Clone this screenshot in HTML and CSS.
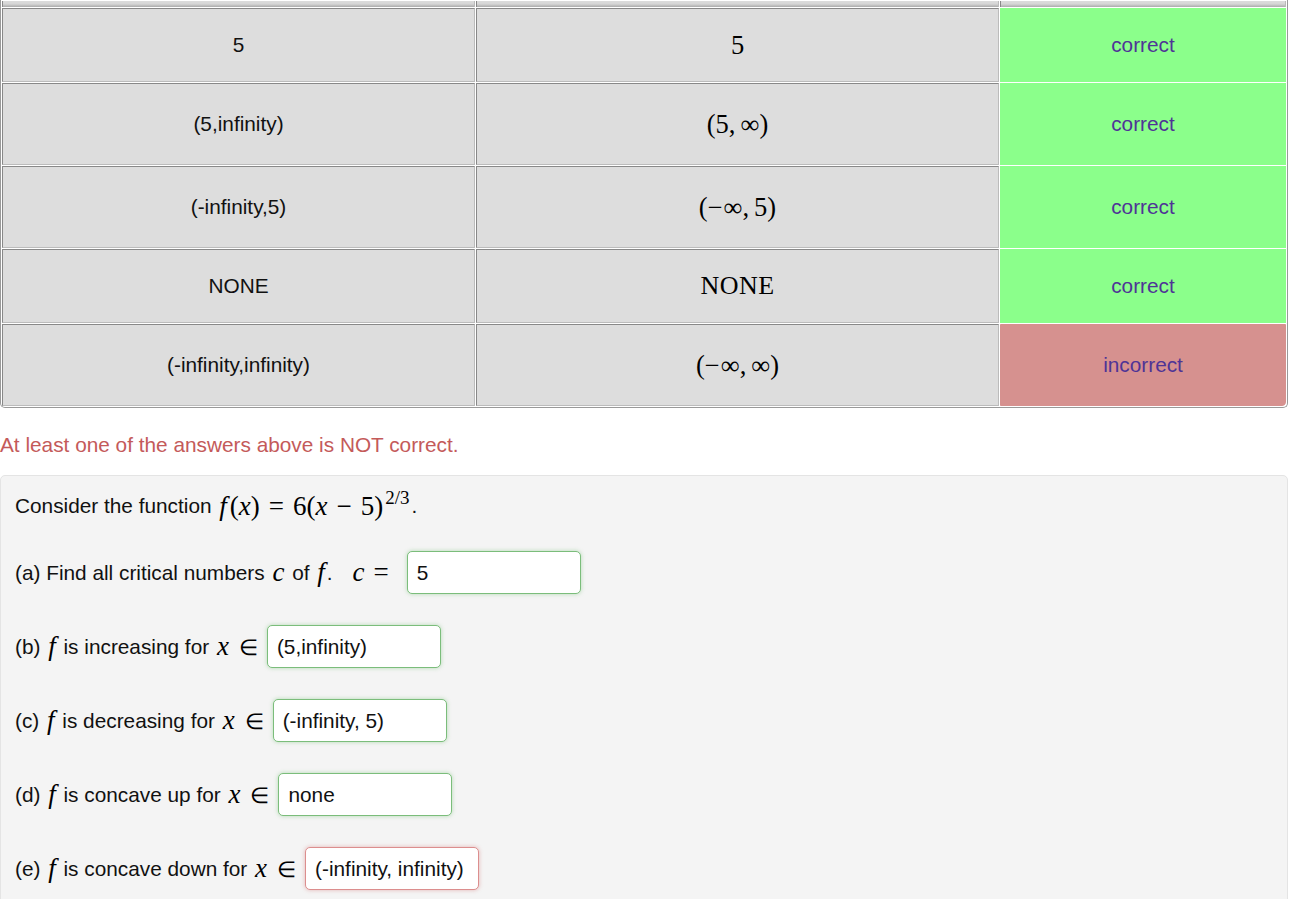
FILE: index.html
```html
<!DOCTYPE html>
<html lang="en">
<head>
<meta charset="utf-8">
<title>Problem</title>
<link rel="stylesheet" href="styles.css">
</head>
<body>
<div class="page">
  <table class="results">
    <tr class="head"><th></th><th></th><th></th></tr>
    <tr class="short">
      <td class="entered">5</td>
      <td class="preview"><span class="tm">5</span></td>
      <td class="ok">correct</td>
    </tr>
    <tr class="tall">
      <td class="entered">(5,infinity)</td>
      <td class="preview"><span class="tm">(5,<span class="thin"></span>∞)</span></td>
      <td class="ok">correct</td>
    </tr>
    <tr class="tall">
      <td class="entered">(-infinity,5)</td>
      <td class="preview"><span class="tm">(<span class="neg">−</span>∞,<span class="thin"></span>5)</span></td>
      <td class="ok">correct</td>
    </tr>
    <tr class="short">
      <td class="entered">NONE</td>
      <td class="preview"><span class="tm none">NONE</span></td>
      <td class="ok">correct</td>
    </tr>
    <tr class="tall">
      <td class="entered">(-infinity,infinity)</td>
      <td class="preview"><span class="tm">(<span class="neg">−</span>∞,<span class="thin"></span>∞)</span></td>
      <td class="bad">incorrect</td>
    </tr>
  </table>

  <p class="warning">At least one of the answers above is NOT correct.</p>

  <div class="problem">
    <div class="line intro">Consider the function <span class="m"><i class="fx">f</i>(<i>x</i>)<span class="rel">=</span>6(<i>x</i><span class="op">−</span>5)<sup>2/3</sup></span>.</div>
    <div class="line">(a) Find all critical numbers <span class="m"><i>c</i></span> of <span class="m"><i>f</i></span>.<span class="quad"></span><span class="m"><i>c</i><span class="rel">=</span></span><input class="ans good" type="text" value="5"></div>
    <div class="line">(b) <span class="m"><i>f</i></span> is increasing for <span class="m"><i>x</i><span class="in">∈</span></span><input class="ans good" type="text" value="(5,infinity)"></div>
    <div class="line">(c) <span class="m"><i>f</i></span> is decreasing for <span class="m"><i>x</i><span class="in">∈</span></span><input class="ans good" type="text" value="(-infinity, 5)"></div>
    <div class="line">(d) <span class="m"><i>f</i></span> is concave up for <span class="m"><i>x</i><span class="in">∈</span></span><input class="ans good" type="text" value="none"></div>
    <div class="line">(e) <span class="m"><i>f</i></span> is concave down for <span class="m"><i>x</i><span class="in">∈</span></span><input class="ans wrong" type="text" value="(-infinity, infinity)"></div>
  </div>
</div>
</body>
</html>
```
FILE: styles.css
```css
html, body {
  margin: 0;
  padding: 0;
  background: #ffffff;
}
body {
  font-family: "Liberation Sans", Arial, sans-serif;
  font-size: 20.8px;
  color: #111;
}
.page {
  width: 1288px;
}
.results {
  width: 1288px;
  border-collapse: separate;
  border-spacing: 1px;
  border: 1px solid #999;
  border-top: none;
  border-radius: 0 0 5px 5px;
  table-layout: fixed;
}
.results th {
  height: 6px;
  padding: 0;
  background: linear-gradient(#dcdcdc 0%, #d6d6d6 50%, #aaaaaa 100%);
  border-left: 1px solid #888;
  border-right: 1px solid #bbb;
}
.results th:nth-child(1), .results td:nth-child(1) { width: 471px; }
.results th:nth-child(2), .results td:nth-child(2) { width: 521px; }
.results td {
  padding: 0;
  text-align: center;
  vertical-align: middle;
  background: #dddddd;
  border-top: 1px solid #888;
  border-left: 1px solid #888;
  border-right: 1px solid #bbb;
  border-bottom: 1px solid #bbb;
}
.results tr.short td { height: 72px; }
.results tr.tall td { height: 80px; }
.results td.ok {
  background: #8bff8b;
  color: #4f3496;
  border-color: #8bff8b;
}
.results td.bad {
  background: #d6918f;
  color: #4f3496;
  border-color: #d6918f;
  border-bottom-right-radius: 4px;
}
.tm {
  font-family: "Liberation Serif", "Times New Roman", serif;
  font-size: 26.5px;
  color: #000;
}
.tm.none { font-size: 26px; letter-spacing: 0.5px; }
.thin { display: inline-block; width: 5px; }
.neg { margin-right: 1px; }
.m {
  font-family: "Liberation Serif", "Times New Roman", serif;
  font-size: 27px;
  color: #000;
  padding: 0 2px;
}
.m i { font-style: italic; }
.m i.fx { margin-right: 3px; }
.m sup {
  font-size: 19px;
  vertical-align: 11px;
  line-height: 0;
  margin-left: 2px;
}
.rel { margin: 0 9px; }
.op { margin: 0 9px; }
.in { font-size: 22px; margin-left: 10px; }
.quad { display: inline-block; width: 18px; }
.warning {
  margin: 23px 0 0 0;
  height: 44px;
  line-height: 28px;
  color: #c45a5a;
}
.problem {
  box-sizing: border-box;
  width: 1288px;
  min-height: 440px;
  background: #f4f4f4;
  border: 1px solid #e4e4e4;
  border-radius: 5px;
  padding: 16px 14px 15px 14px;
  display: flex;
  flex-direction: column;
  gap: 31px;
}
.line {
  display: flex;
  align-items: center;
  white-space: pre;
  height: 43px;
}
.line.intro { height: 28px; }
.ans {
  box-sizing: border-box;
  width: 174px;
  height: 43px;
  margin-left: 7px;
  padding: 0 9px;
  border: 1px solid #7bbd7b;
  border-radius: 5px;
  background: #fff;
  font-family: "Liberation Sans", Arial, sans-serif;
  font-size: 20.8px;
  color: #111;
  outline: none;
}
.ans.good {
  box-shadow: 0 0 4px rgba(60, 170, 60, 0.35);
}
.ans.wrong {
  border-color: #dc8e8e;
  box-shadow: 0 0 4px rgba(200, 60, 60, 0.35);
}
```
